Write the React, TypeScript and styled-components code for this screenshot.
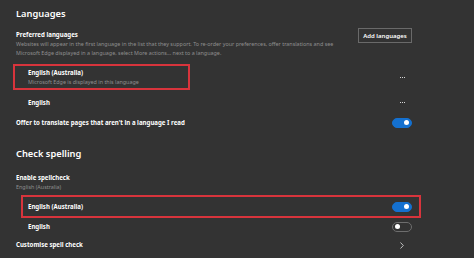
import React from 'react'
import styled, { createGlobalStyle } from 'styled-components'

const GlobalStyle = createGlobalStyle`
  html, body {
    margin: 0;
    padding: 0;
    background: #333333;
  }
  body {
    font-family: "Noto Sans", "Open Sans", "Liberation Sans", sans-serif;
    color: #ffffff;
  }
`

const Page = styled.div`
  width: 474px;
  height: 258px;
  overflow: hidden;
  background: #333333;
  box-sizing: border-box;
  padding: 0 62px 0 16px;
  display: flex;
  flex-direction: column;
`

const Heading = styled.div<{ $height: number; $pad?: number }>`
  height: ${(p) => p.$height}px;
  box-sizing: border-box;
  padding-top: ${(p) => p.$pad ?? 0}px;
  display: flex;
  align-items: center;
  font-size: 9.3px;
  font-weight: 600;
`

const Section = styled.div<{ $height: number; $pad?: number }>`
  height: ${(p) => p.$height}px;
  padding-top: ${(p) => p.$pad ?? 0}px;
  display: flex;
  justify-content: space-between;
  align-items: flex-start;
  box-sizing: border-box;
`

const Row = styled.div<{ $height: number; $indent?: boolean }>`
  position: relative;
  height: ${(p) => p.$height}px;
  display: flex;
  align-items: center;
  justify-content: space-between;
  padding-left: ${(p) => (p.$indent ? 12 : 0)}px;
`

const TextBlock = styled.div`
  display: flex;
  flex-direction: column;
`

const Title = styled.div`
  font-size: 6.1px;
  font-weight: 700;
  line-height: 10px;
`

const Sub = styled.div`
  font-size: 5.4px;
  color: #8f8f8f;
  line-height: 9px;
`

const AddButton = styled.button`
  margin-top: 2px;
  height: 15px;
  width: 54px;
  padding: 0;
  background: #333333;
  border: 1px solid #6a6a6a;
  color: #ffffff;
  font-family: inherit;
  font-size: 6px;
  font-weight: 600;
`

const Dots = styled.div`
  width: 20px;
  display: flex;
  justify-content: center;
  gap: 1px;
  & > span {
    width: 1px;
    height: 1px;
    background: #d6d6d6;
  }
`

const Toggle = styled.div<{ $on?: boolean }>`
  position: relative;
  width: 20px;
  height: 10px;
  border-radius: 5px;
  box-sizing: border-box;
  background: ${(p) => (p.$on ? '#1470cf' : '#333333')};
  border: 1px solid ${(p) => (p.$on ? '#1470cf' : '#6e6e6e')};
  &::after {
    content: '';
    position: absolute;
    top: 1.5px;
    ${(p) => (p.$on ? 'right: 2px;' : 'left: 2px;')}
    width: 5px;
    height: 5px;
    border-radius: 50%;
    background: #ffffff;
  }
`

const Chevron = styled.div`
  width: 20px;
  display: flex;
  justify-content: center;
`

const Highlight = styled.div<{ $left: number; $right: number; $top: number; $bottom: number }>`
  position: absolute;
  left: ${(p) => p.$left}px;
  right: ${(p) => p.$right}px;
  top: ${(p) => p.$top}px;
  bottom: ${(p) => p.$bottom}px;
  border: 2px solid #d8343c;
  pointer-events: none;
`

const MoreDots = () => (
  <Dots>
    <span />
    <span />
    <span />
  </Dots>
)

export default function App() {
  return (
    <>
      <GlobalStyle />
      <Page>
        <Heading $height={26}>Languages</Heading>
        <Section $height={36} $pad={0}>
          <TextBlock style={{ paddingTop: 4 }}>
            <Title>Preferred languages</Title>
            <Sub>
              Websites will appear in the first language in the list that they support. To re-order your preferences, offer translations and see
            </Sub>
            <Sub>Microsoft Edge displayed in a language, select More actions... next to a language.</Sub>
          </TextBlock>
          <AddButton>Add languages</AddButton>
        </Section>
        <Row $height={31} $indent>
          <Highlight $left={-3} $right={222} $top={2} $bottom={3} />
          <TextBlock>
            <Title>English (Australia)</Title>
            <Sub>Microsoft Edge is displayed in this language</Sub>
          </TextBlock>
          <MoreDots />
        </Row>
        <Row $height={19} $indent>
          <Title>English</Title>
          <MoreDots />
        </Row>
        <Row $height={21}>
          <Title>Offer to translate pages that aren't in a language I read</Title>
          <Toggle $on />
        </Row>
        <Heading $height={37} $pad={3}>Check spelling</Heading>
        <Section $height={25} $pad={3}>
          <TextBlock>
            <Title>Enable spellcheck</Title>
            <Sub>English (Australia)</Sub>
          </TextBlock>
        </Section>
        <Row $height={23} $indent>
          <Highlight $left={5} $right={-9} $top={0} $bottom={0} />
          <Title>English (Australia)</Title>
          <Toggle $on />
        </Row>
        <Row $height={17} $indent>
          <Title>English</Title>
          <Toggle />
        </Row>
        <Row $height={20}>
          <Title>Customise spell check</Title>
          <Chevron>
            <svg width="4" height="7" viewBox="0 0 4 7">
              <path d="M0.5 0.5 L3.3 3.5 L0.5 6.5" fill="none" stroke="#cfcfcf" strokeWidth="0.9" />
            </svg>
          </Chevron>
        </Row>
      </Page>
    </>
  )
}
